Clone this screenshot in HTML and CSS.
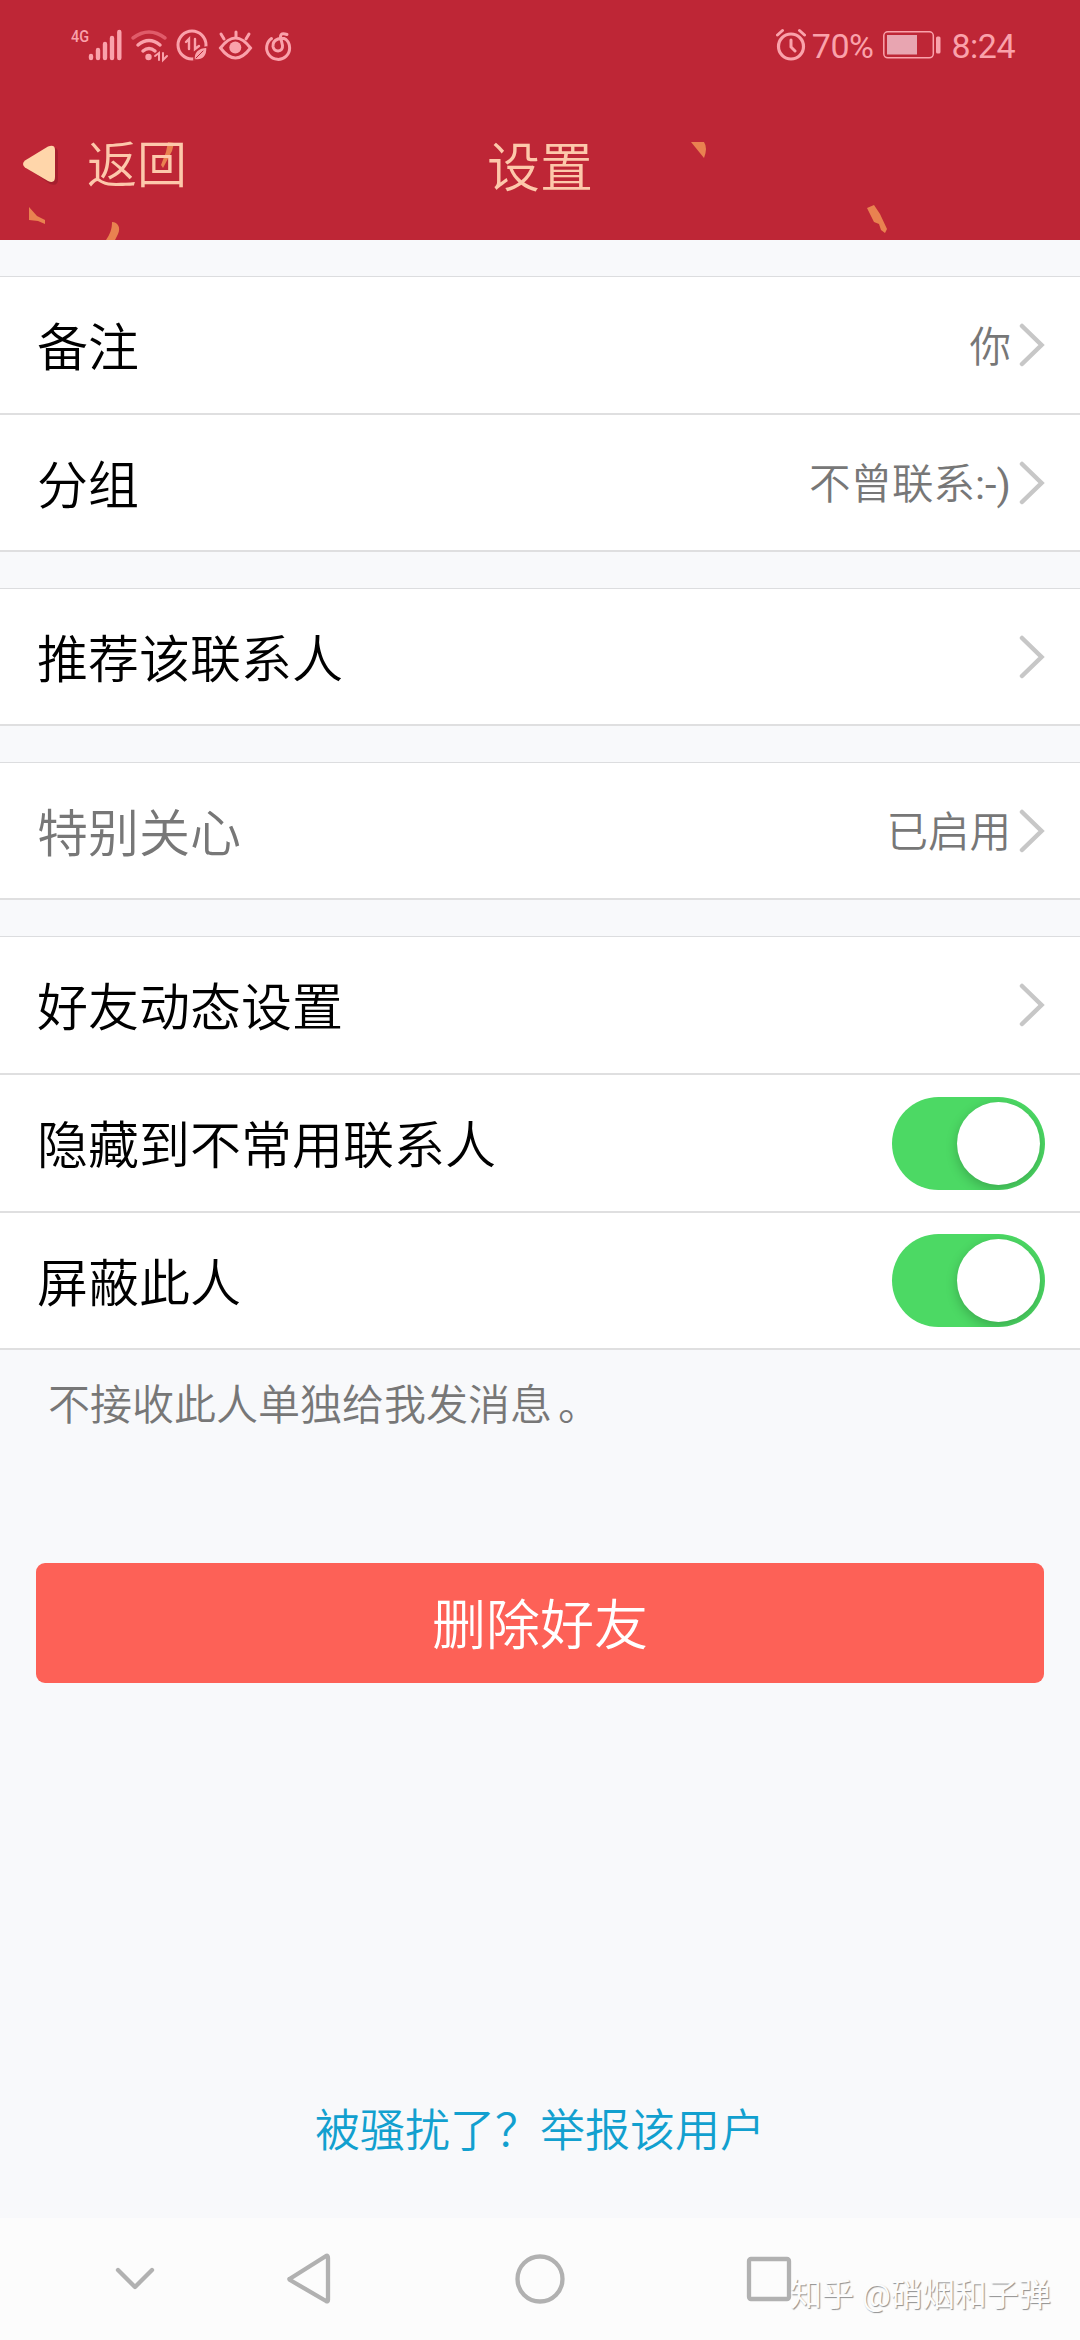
FILE: index.html
```html
<!DOCTYPE html>
<html lang="zh-CN">
<head>
<meta charset="utf-8">
<title>设置</title>
<link rel="stylesheet" href="styles.css">
</head>
<body>
<div class="screen">
  <header class="header">
    <svg class="confetti" viewBox="0 0 1080 240" aria-hidden="true">
      <path d="M29 207L37 216L45 220L45 224L38 221L29 220Z"/>
      <path d="M112 222C118 222 121 228 118 234L115 240H106C110 234 112 229 112 222Z"/>
      <path d="M168 142L174 143L172 151L163 168L161 165L166 152Z"/>
      <path d="M691 142H704Q708 148 704 158Z"/>
      <path d="M867 208L874 205L880 214L887 229L885 233L881 230L879 224L874 222Z"/>
    </svg>
    <div class="status">
      <div class="status-left">
        <svg width="260" height="70" viewBox="0 0 260 70" fill="none" stroke="#faa2ab" stroke-linecap="round">
          <path d="M41 46v2M48 40v8M55 34v14M62 28v20M69.300 22v26" stroke-width="4.400"/>
          <path d="M83 28Q99 16 115 28" stroke="#e05b69" stroke-width="3.500"/>
          <path d="M88 35Q99 26 110 35M93 41Q99 36 105 41" stroke-width="3.500"/>
          <circle cx="98.500" cy="47" r="3.200" fill="#faa2ab" stroke="none"/>
          <path d="M105 46l4-3v7M113 43v7l4-4" stroke-width="2"/>
          <circle cx="142" cy="35" r="14" stroke-width="3"/>
          <path d="M136 32l3-3v10M145 29v10l4-3" stroke-width="2.400"/>
          <path d="M144 50Q143 38 157 37Q158 51 144 50Z" fill="#faa2ab" stroke="#be2636" stroke-width="1.500"/>
          <path d="M146 48l7-7" stroke="#be2636" stroke-width="1"/>
          <path d="M170.500 38Q185.500 18 200.500 38Q185.500 58 170.500 38Z" stroke-width="3"/>
          <circle cx="185.300" cy="37.500" r="6" fill="#faa2ab" stroke="none"/>
          <path d="M186 22v5M171 24l3 5M199 24l-3 5" stroke-width="3"/>
          <path d="M221.500 28.500A11.500 11.500 0 1 0 236 29.500Q233 27.500 228 29Q222.500 31 223 36.500Q224 41 228 41Q233 40.500 232.500 35.500L230.500 27Q230.500 22 237 24.500" stroke-width="3"/>
        </svg>
        <span class="net">4G</span>
      </div>
      <div class="status-right">
        <svg width="30" height="34" viewBox="0 0 30 34" fill="none" stroke="#faa2ab" stroke-linecap="round"><circle cx="15" cy="18.500" r="12.500" stroke-width="3.200"/><path d="M1.500 7l5-4.500M28.500 7l-5-4.500M15 12v7l4 4" stroke-width="3"/></svg>
        <span class="percent">70%</span>
        <svg class="battery" width="58" height="28" viewBox="0 0 58 28"><rect x=".8" y=".8" width="49.500" height="26" rx="4" fill="none" stroke="#faa2ab" stroke-width="1.500"/><rect x="4" y="4" width="30" height="19.500" fill="#e8a5b1"/><rect x="53" y="5.500" width="4.500" height="17" rx="1.500" fill="#faa2ab"/></svg>
        <span class="clock">8:24</span>
      </div>
    </div>
    <nav class="navbar">
      <div class="back">
        <svg width="38" height="44" viewBox="0 0 38 44"><path d="M7 18L29 5Q36 2 36 9V35Q36 43 28 40L8 26Q3 22 7 18Z" fill="#941b2a" opacity=".6"/><path d="M3 16.500L26 2.500Q33 0 33 6V33Q33 40 26 37L3 23.500Q-1 20 3 16.500Z" fill="#ffd6aa"/></svg>
        <span>返回</span>
      </div>
      <h1 class="title">设置</h1>
    </nav>
  </header>

  <main class="content">
    <section class="group">
      <div class="row"><span class="label">备注</span><span class="value">你</span><svg class="chevron" viewBox="0 0 26 44"><path d="M3 3L22.500 22L3 41"/></svg></div>
      <div class="row"><span class="label">分组</span><span class="value">不曾联系<span class="latin">:-)</span></span><svg class="chevron" viewBox="0 0 26 44"><path d="M3 3L22.500 22L3 41"/></svg></div>
    </section>
    <section class="group">
      <div class="row"><span class="label">推荐该联系人</span><svg class="chevron" viewBox="0 0 26 44"><path d="M3 3L22.500 22L3 41"/></svg></div>
    </section>
    <section class="group">
      <div class="row"><span class="label muted">特别关心</span><span class="value">已启用</span><svg class="chevron" viewBox="0 0 26 44"><path d="M3 3L22.500 22L3 41"/></svg></div>
    </section>
    <section class="group">
      <div class="row"><span class="label">好友动态设置</span><svg class="chevron" viewBox="0 0 26 44"><path d="M3 3L22.500 22L3 41"/></svg></div>
      <div class="row"><span class="label">隐藏到不常用联系人</span><span class="switch"><span class="knob"></span></span></div>
      <div class="row"><span class="label">屏蔽此人</span><span class="switch"><span class="knob"></span></span></div>
    </section>
    <p class="hint">不接收此人单独给我发消息<span class="stop">。</span></p>
    <button class="delete">删除好友</button>
    <a class="report">被骚扰了？举报该用户</a>
  </main>

  <footer class="sysnav">
    <svg width="1080" height="122" viewBox="0 0 1080 122" fill="none" stroke="#b1b1b1" stroke-width="4.300" stroke-linecap="round" stroke-linejoin="round">
      <path d="M118 52l17 17l17-17"/>
      <path d="M289.500 61L326 38Q328 37 328 40V82Q328 84 326 83L290 62Q289 61 289.500 61Z"/>
      <circle cx="540" cy="61" r="22.500"/>
      <rect x="749" y="41" width="40" height="40" rx="2"/>
    </svg>
    <span class="watermark">知乎 @硝烟和子弹</span>
  </footer>
</div>
</body>
</html>
```
FILE: styles.css
```css
* { box-sizing: border-box; }
body { margin: 0; background: #f8f9fb; font-family: Roboto, "Noto Sans CJK SC", sans-serif; }
.screen { width: 1080px; height: 2340px; display: flex; flex-direction: column; overflow: hidden; font-weight: 350; }
.header { position: relative; height: 240px; background: #be2636; }
.confetti { position: absolute; inset: 0; width: 1080px; height: 240px; fill: #e98250; }
.status { height: 90px; display: flex; justify-content: space-between; padding: 10px 65px 10px 50px; color: #faa2ab; }
.status-left { position: relative; height: 70px; }
.net { position: absolute; left: 21px; top: 17px; font: 500 17px/18px Roboto, sans-serif; transform: scaleX(.85); transform-origin: left; }
.status-right { height: 70px; display: flex; align-items: center; font: 400 34px/40px Roboto, sans-serif; letter-spacing: -.5px; }
.status-right span { padding-top: 2px; }
.percent { margin-left: 6px; }
.battery { margin: 0 10px 0 10px; }
.navbar { position: relative; height: 150px; display: grid; grid-template-columns: 1fr auto 1fr; align-items: center; color: #fdc8ab; }
.back { display: flex; align-items: center; gap: 27px; padding: 2px 0 0 22px; font-size: 50px; line-height: 60px; }
.title { margin: 8px 0 0; font-size: 53px; line-height: 60px; font-weight: 350; }
.content { flex: 1; padding-top: 36px; display: flex; flex-direction: column; }
.group { background: #fff; border-top: 1.500px solid #dcdddf; margin-bottom: 36px; }
.row { height: 138px; display: flex; align-items: center; border-bottom: 2px solid #dfdfe0; padding: 0 35px 0 37px; }
.row:last-child { height: 137px; }
.label { flex: 1; padding-top: 8px; font-size: 51px; line-height: 70px; color: #000; }
.muted { color: #777; }
.value { padding-top: 5px; font-size: 41.500px; line-height: 60px; color: #777; margin-right: 8px; }
.latin { font-weight: 400; }
.chevron { width: 26px; height: 44px; fill: none; stroke: #c7c7c7; stroke-width: 4.500; stroke-linecap: round; }
.switch { width: 153px; height: 93px; border-radius: 47px; background: #4cd964; padding: 5px; display: flex; justify-content: flex-end; overflow: hidden; }
.knob { width: 83px; height: 83px; border-radius: 50%; background: #fff; box-shadow: 0 4px 12px rgba(0, 0, 0, .22); }
.hint { margin: -10px 0 0 48px; font-size: 42px; line-height: 60px; color: #777; }
.stop { margin-left: 6px; }
.delete { margin: 127px 36px 0; height: 120px; padding: 8px 0 0; border: 0; border-radius: 9px; background: #fd6157; color: #fff; font: 350 54px/70px Roboto, "Noto Sans CJK SC", sans-serif; }
.report { margin-top: 416px; text-align: center; font-size: 45px; line-height: 66px; color: #12a0cf; }
.sysnav { position: relative; height: 122px; background: #fcfcfc; }
.sysnav svg { display: block; }
.watermark { position: absolute; left: 790px; top: 57px; font-size: 32px; line-height: 40px; font-weight: 400; color: #fcfcfc; text-shadow: 1px 1px 1px #8f8f8f; white-space: nowrap; }
```
